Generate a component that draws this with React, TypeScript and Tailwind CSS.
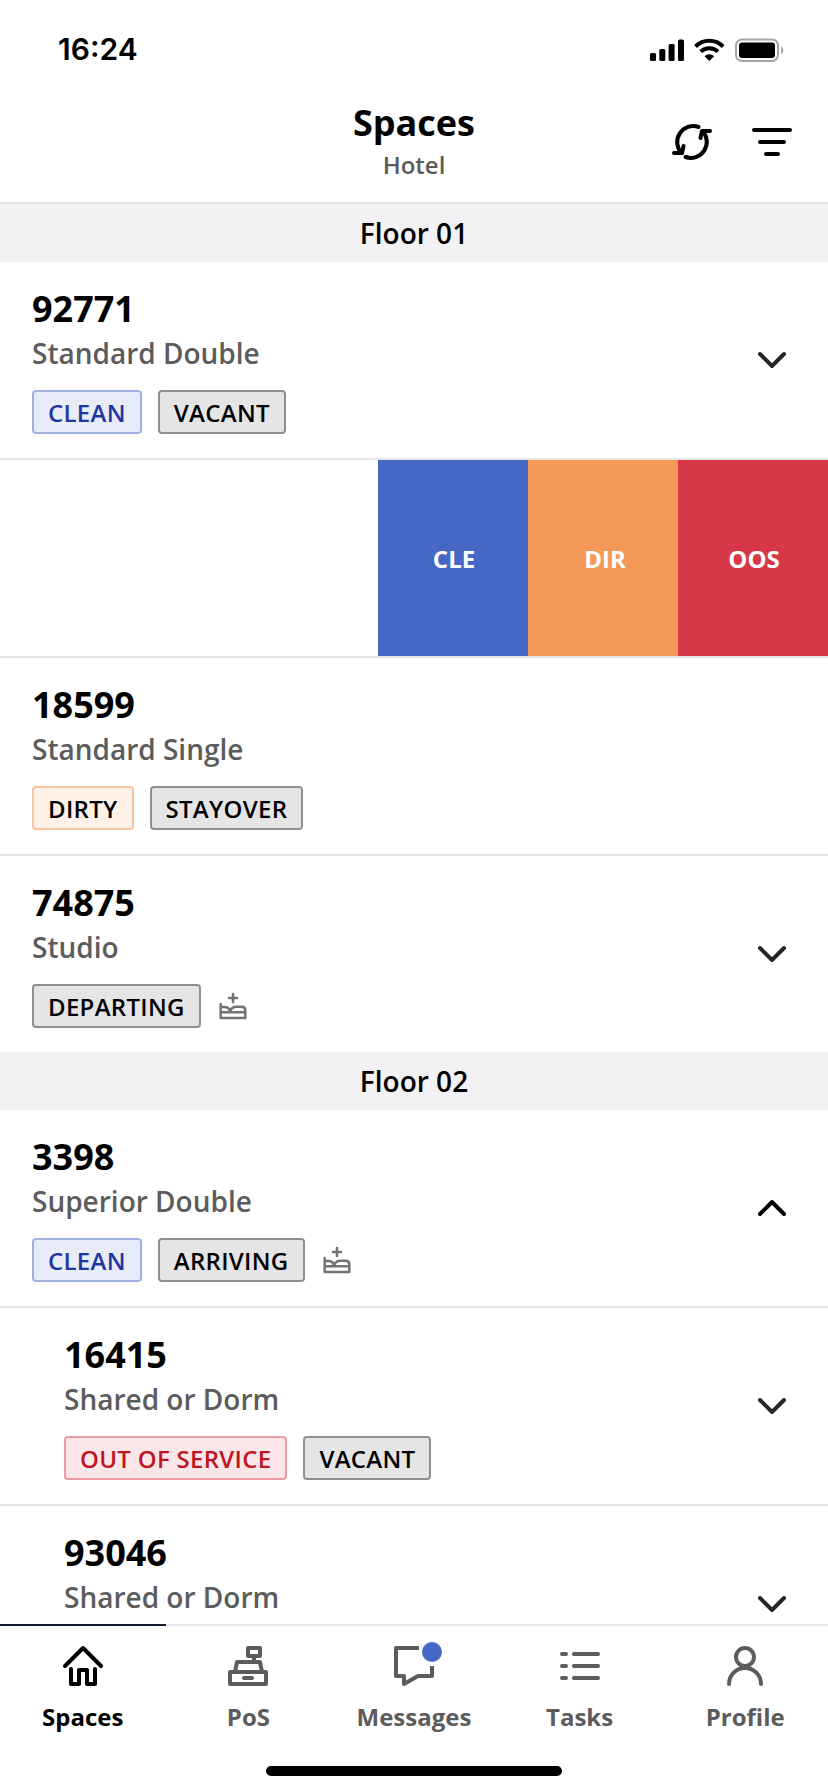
import React from 'react'

type Tone = 'clean' | 'dirty' | 'oos' | 'neutral'

interface Badge {
  label: string
  tone: Tone
}

interface SpaceRowProps {
  name: string
  type: string
  badges?: Badge[]
  bed?: boolean
  chevron?: 'up' | 'down'
  nested?: boolean
  last?: boolean
}

const toneClasses: Record<Tone, string> = {
  clean: 'border-[#a0b2e3] bg-[#e8ecf8] text-[#1f36a0]',
  dirty: 'border-[#fac6a1] bg-[#fef1e8] text-black',
  oos: 'border-[#ef99a3] bg-[#fae6e9] text-[#bd1622]',
  neutral: 'border-[#8f8f8f] bg-[#e5e5e5] text-black',
}

function BedIcon() {
  return (
    <svg width="32" height="32" viewBox="0 0 32 32" fill="none" stroke="#737373" strokeWidth="2.5" strokeLinejoin="round" strokeLinecap="round">
      <path d="M16 4v8M12 8h8" />
      <path d="M3.700 14v14h24.600v-7.500c0-2.500-1.300-3.800-3.600-3.800h-5c-3.200 0-5.400 1.300-6.200 4M3.700 17h4c2.300 0 4 .8 4.800 3.200M3.700 22.300h24.600" />
    </svg>
  )
}

function Chevron({ direction }: { direction: 'up' | 'down' }) {
  return (
    <svg width="48" height="48" viewBox="0 0 48 48" fill="none" stroke={direction === 'up' ? '#000' : '#262628'} strokeWidth="4" strokeLinecap="round" strokeLinejoin="round">
      <path d={direction === 'up' ? 'M12 30l12-12 12 12' : 'M12 18l12 12 12-12'} />
    </svg>
  )
}

function SpaceRow({ name, type, badges = [], bed, chevron, nested, last }: SpaceRowProps) {
  return (
    <div className={`flex shrink-0 items-center justify-between pr-8 ${nested ? 'pl-16' : 'pl-8'} ${last ? 'h-[196px]' : 'h-[198px] border-b-2 border-[#e5e5e5]'}`}>
      <div className="flex flex-col">
        <div className="text-[36px] leading-[46px] font-bold">{name}</div>
        <div className="text-[28px] leading-[42px] font-semibold text-[#5c5c5c]">{type}</div>
        <div className="mt-4 flex h-11 items-center gap-4">
          {badges.map((badge) => (
            <span key={badge.label} className={`flex h-11 items-center rounded-[4px] border-2 px-[14px] pt-0.5 text-[24px] font-semibold tracking-[0.3px] ${toneClasses[badge.tone]}`}>
              {badge.label}
            </span>
          ))}
          {bed && <BedIcon />}
        </div>
      </div>
      {chevron && <Chevron direction={chevron} />}
    </div>
  )
}

function FloorHeader({ label }: { label: string }) {
  return <div className="flex h-[58px] shrink-0 items-center justify-center bg-[#f2f2f4] text-[28px] font-semibold">{label}</div>
}

function SwipeActions() {
  return (
    <div className="flex h-[198px] shrink-0 justify-end border-b-2 border-[#e5e5e5] text-[24px] font-bold text-white">
      <div className="flex w-[150px] items-center justify-center bg-[#4667c3] pt-0.5 pl-0.5">CLE</div>
      <div className="flex w-[150px] items-center justify-center bg-[#f59959] pt-0.5 pl-1">DIR</div>
      <div className="flex w-[150px] items-center justify-center bg-[#d63847] pt-0.5 pl-0.5">OOS</div>
    </div>
  )
}

function StatusBar() {
  return (
    <div className="flex h-[88px] items-center justify-between pt-3 pr-[44px] pl-[58px]">
      <span className="pb-0.5 font-['Inter',sans-serif] text-[30px] font-semibold">16:24</span>
      <svg width="134" height="24" viewBox="0 0 134 24">
        <rect x="0" y="15" width="6" height="8" rx="1.500" />
        <rect x="9.300" y="11" width="6" height="12" rx="1.500" />
        <rect x="18.600" y="6" width="6" height="17" rx="1.500" />
        <rect x="28" y="1.500" width="6" height="21.500" rx="1.500" />
        <g fill="none" stroke="#000" strokeWidth="4">
          <path d="M45.500 8.500a19.500 19.500 0 0 1 27.600 0" />
          <path d="M50.700 13.700a12.200 12.200 0 0 1 17.200 0" />
        </g>
        <path d="M59.300 23l-4.800-4.700a6.800 6.800 0 0 1 9.600 0z" />
        <rect x="86" y="1.500" width="42" height="21.500" rx="6" fill="none" stroke="#a6a6a6" strokeWidth="2" />
        <rect x="89" y="4.500" width="36" height="15.500" rx="3" />
        <path d="M131 8.500c3 1 3 6.500 0 7.500z" fill="#a6a6a6" />
      </svg>
    </div>
  )
}

function Header() {
  return (
    <div className="grid h-[116px] grid-cols-3 items-center border-b-2 border-[#e5e5e5]">
      <div />
      <div className="flex flex-col items-center pb-2">
        <div className="text-[36px] leading-[48px] font-bold">Spaces</div>
        <div className="text-[24px] leading-9 font-semibold text-[#5c5c5c]">Hotel</div>
      </div>
      <div className="flex justify-end gap-8 pr-8 pb-[6px]">
        <svg width="48" height="48" viewBox="0 0 48 48" fill="none" stroke="#000" strokeWidth="4" strokeLinecap="round" strokeLinejoin="round">
          <path d="M30.500 9A16 16 0 0 0 13.500 35M17.500 39A16 16 0 0 0 34.500 13" />
          <path d="M42 13h-8l-1.500 7M6 35h8l1.500-7" />
        </svg>
        <svg width="48" height="48" viewBox="0 0 48 48" fill="none" stroke="#000" strokeWidth="4" strokeLinecap="round">
          <path d="M6 12h36M12 24h24M18 36h12" />
        </svg>
      </div>
    </div>
  )
}

const tabs = [
  {
    label: 'Spaces',
    icon: <path d="M6 24L24 6l18 18M12 27v15h8V28h8v14h8V27" />,
  },
  {
    label: 'PoS',
    icon: (
      <>
        <path d="M24 6h12v8H24zM30 14v6M11 30l2-10h23l2 10M6 30h36v12H6z" />
        <path d="M20 36h8" />
      </>
    ),
  },
  {
    label: 'Messages',
    icon: <path strokeLinecap="butt" d="M29 6H6v28h8v8l14-8h14V24" />,
  },
  {
    label: 'Tasks',
    icon: <path d="M6 12h4M18 12h24M6 24h4M18 24h24M6 36h4M18 36h24" />,
  },
  {
    label: 'Profile',
    icon: (
      <>
        <circle cx="24" cy="15" r="9" />
        <path d="M8 42a16 16 0 0 1 32 0" />
      </>
    ),
  },
]

function TabBar() {
  return (
    <div className="flex h-[168px] shrink-0 flex-col bg-white">
      <div className="grid grid-cols-5">
        {tabs.map((tab, i) => (
          <div key={tab.label} className={`flex flex-col items-center border-t-2 pt-4 ${i === 0 ? 'border-[#111827] text-black' : 'border-[#e5e7eb] text-[#5c5c5c]'}`}>
            <div className="relative">
              <svg width="48" height="48" viewBox="0 0 48 48" fill="none" stroke="currentColor" strokeWidth="4" strokeLinecap="round" strokeLinejoin="round">
                {tab.icon}
              </svg>
              {tab.label === 'Messages' && <span className="absolute top-0 right-[-4px] size-5 rounded-full bg-[#4667c3]" />}
            </div>
            <span className="mt-[9px] text-[24px] leading-9 font-bold">{tab.label}</span>
          </div>
        ))}
      </div>
      <div className="mx-auto mt-auto mb-4 h-[10px] w-[296px] rounded-full bg-black" />
    </div>
  )
}

export default function App() {
  return (
    <div className="flex h-[1792px] w-[828px] flex-col overflow-hidden bg-white font-['Open_Sans',sans-serif] text-black">
      <StatusBar />
      <Header />
      <div className="flex min-h-0 flex-1 flex-col overflow-hidden">
        <FloorHeader label="Floor 01" />
        <SpaceRow name="92771" type="Standard Double" badges={[{ label: 'CLEAN', tone: 'clean' }, { label: 'VACANT', tone: 'neutral' }]} chevron="down" />
        <SwipeActions />
        <SpaceRow name="18599" type="Standard Single" badges={[{ label: 'DIRTY', tone: 'dirty' }, { label: 'STAYOVER', tone: 'neutral' }]} />
        <SpaceRow name="74875" type="Studio" badges={[{ label: 'DEPARTING', tone: 'neutral' }]} bed chevron="down" last />
        <FloorHeader label="Floor 02" />
        <SpaceRow name="3398" type="Superior Double" badges={[{ label: 'CLEAN', tone: 'clean' }, { label: 'ARRIVING', tone: 'neutral' }]} bed chevron="up" />
        <SpaceRow name="16415" type="Shared or Dorm" badges={[{ label: 'OUT OF SERVICE', tone: 'oos' }, { label: 'VACANT', tone: 'neutral' }]} chevron="down" nested />
        <SpaceRow name="93046" type="Shared or Dorm" chevron="down" nested />
      </div>
      <TabBar />
    </div>
  )
}
